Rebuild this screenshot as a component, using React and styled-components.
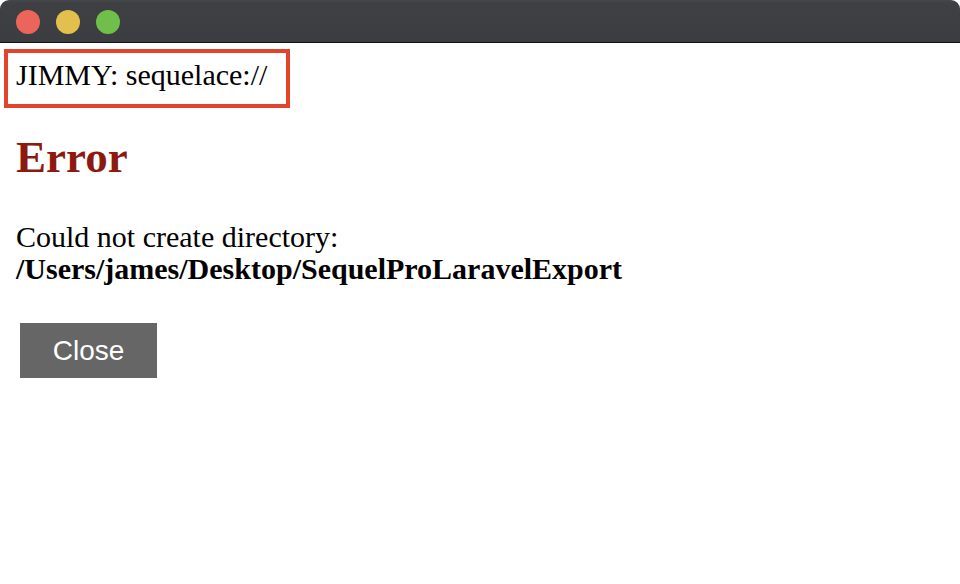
import styled, { createGlobalStyle } from 'styled-components'

const GlobalStyle = createGlobalStyle`
  html, body {
    margin: 0;
    padding: 0;
    background: #ffffff;
  }
  body {
    font-family: 'Liberation Serif', 'Times New Roman', serif;
    color: #000000;
  }
`

const Window = styled.div`
  width: 960px;
  height: 584px;
  background: #ffffff;
  overflow: hidden;
`

const TitleBar = styled.div`
  display: flex;
  align-items: center;
  gap: 16px;
  height: 43px;
  padding: 0 16px;
  box-sizing: border-box;
  background: linear-gradient(#45474a 0, #3e4043 3px, #3b3d40 100%);
  border-bottom: 1px solid #121212;
  border-radius: 9px 9px 0 0;
`

const Light = styled.span`
  width: 24px;
  height: 24px;
  border-radius: 50%;
  background: ${p => p.color};
  margin-top: 2px;
`

const Content = styled.div`
  padding: 6px 0 0 4px;
`

const Banner = styled.div`
  width: 286px;
  height: 59px;
  box-sizing: border-box;
  border: 4px solid #e4432b;
  padding: 6px 8px 0;
  font-size: 30px;
  line-height: 32px;
  white-space: nowrap;
`

const Body = styled.div`
  padding-left: 12px;
`

const Heading = styled.h1`
  margin: 23px 0 0;
  font-size: 45px;
  line-height: 52px;
  font-weight: bold;
  color: #8d1a10;
`

const Message = styled.p`
  margin: 38px 0 0;
  font-size: 30px;
  line-height: 32px;
`

const Path = styled.strong`
  display: block;
  font-weight: bold;
`

const CloseButton = styled.button`
  display: flex;
  align-items: center;
  justify-content: center;
  margin: 38px 0 0 4px;
  width: 137px;
  height: 55px;
  padding: 0;
  border: none;
  background: #666666;
  color: #ffffff;
  font-family: 'Liberation Sans', Arial, sans-serif;
  font-size: 28px;
  cursor: pointer;
`

export default function App() {
  return (
    <Window>
      <GlobalStyle />
      <TitleBar>
        <Light color="#ec655a" />
        <Light color="#e3c04d" />
        <Light color="#6fbf4a" />
      </TitleBar>
      <Content>
        <Banner>JIMMY: sequelace://</Banner>
        <Body>
          <Heading>Error</Heading>
          <Message>
            Could not create directory:
            <Path>/Users/james/Desktop/SequelProLaravelExport</Path>
          </Message>
          <CloseButton>Close</CloseButton>
        </Body>
      </Content>
    </Window>
  )
}
